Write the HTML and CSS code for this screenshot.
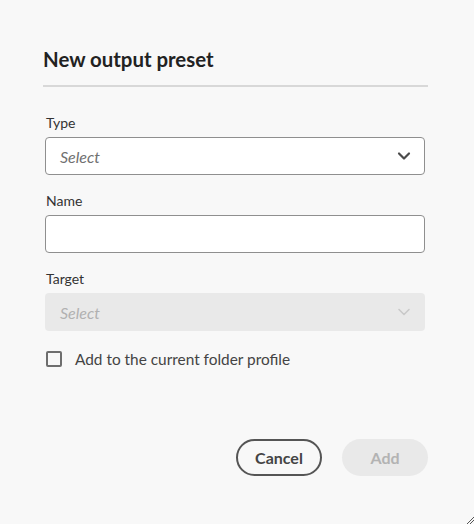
FILE: index.html
```html
<!DOCTYPE html>
<html lang="en">
<head>
<meta charset="utf-8">
<title>New output preset</title>
<link rel="stylesheet" href="styles.css">
</head>
<body>
<div class="dialog">
  <h1 class="title">New output preset</h1>
  <hr class="divider">
  <div class="field">
    <label class="label">Type</label>
    <div class="select">
      <span class="placeholder">Select</span>
      <svg class="chevron" width="14" height="10" viewBox="0 0 14 10"><path d="M2 2.5 L7 7.5 L12 2.5" fill="none" stroke="#4b4b4b" stroke-width="2.2" stroke-linecap="round" stroke-linejoin="round"/></svg>
    </div>
  </div>
  <div class="field">
    <label class="label">Name</label>
    <div class="input"></div>
  </div>
  <div class="field">
    <label class="label">Target</label>
    <div class="select disabled">
      <span class="placeholder">Select</span>
      <svg class="chevron" width="14" height="10" viewBox="0 0 14 10"><path d="M2 2.5 L7 7.5 L12 2.5" fill="none" stroke="#c9c9c9" stroke-width="1.6" stroke-linecap="round" stroke-linejoin="round"/></svg>
    </div>
  </div>
  <div class="check-row">
    <span class="checkbox"></span>
    <span class="check-label">Add to the current folder profile</span>
  </div>
  <div class="actions">
    <button class="btn btn-cancel">Cancel</button>
    <button class="btn btn-add">Add</button>
  </div>
</div>
<svg class="grip" width="8" height="8" viewBox="0 0 8 8"><path d="M1 8 L8 1 M4 8 L8 4" stroke="#555" stroke-width="1"/></svg>
</body>
</html>
```
FILE: styles.css
```css
html, body {
  margin: 0;
  padding: 0;
}
body {
  background: #f8f8f8;
  width: 474px;
  height: 524px;
  overflow: hidden;
  position: relative;
  font-family: Lato, "Noto Sans", sans-serif;
  color: #2c2c2c;
}
.dialog {
  padding: 46px 46px 0 43px;
}
.title {
  margin: 0;
  font-size: 20.4px;
  font-weight: 700;
  line-height: 26px;
  color: #222;
}
.divider {
  margin: 13px 0 0 0;
  border: 0;
  height: 2px;
  background: #d8d8d8;
}
.field {
  padding: 0 3px 0 2px;
}
.field:first-of-type {
  margin-top: 26px;
}
.label {
  display: block;
  font-size: 14px;
  line-height: 20px;
  color: #333;
  padding-left: 1px;
  margin-bottom: 4px;
}
.field + .field {
  margin-top: 16px;
}
.select, .input {
  height: 38px;
  box-sizing: border-box;
  border: 1px solid #8f8f8f;
  border-radius: 4px;
  background: #fff;
  display: flex;
  align-items: center;
  justify-content: space-between;
  padding: 0 13px 0 14px;
}
.placeholder {
  font-style: italic;
  font-size: 16px;
  color: #707070;
}
.select.disabled {
  border-color: transparent;
  background: #e9e9e9;
}
.select.disabled .placeholder {
  color: #b1b1b1;
}
.check-row {
  display: flex;
  align-items: center;
  gap: 13px;
  margin-top: 19px;
  padding-left: 3px;
}
.checkbox {
  width: 16px;
  height: 16px;
  box-sizing: border-box;
  border: 2px solid #6e6e6e;
  border-radius: 2px;
}
.check-label {
  font-size: 15.4px;
  color: #444;
}
.actions {
  display: flex;
  justify-content: flex-end;
  gap: 20px;
  margin-top: 71px;
}
.btn {
  width: 86px;
  height: 37px;
  border-radius: 19px;
  font-family: inherit;
  font-size: 16px;
  font-weight: 700;
  box-sizing: border-box;
}
.btn-cancel {
  background: transparent;
  border: 2px solid #555;
  color: #444;
}
.btn-add {
  background: #e9e9e9;
  border: 0;
  color: #b3b3b3;
}
.grip {
  position: absolute;
  right: 0;
  bottom: 0;
}
```
